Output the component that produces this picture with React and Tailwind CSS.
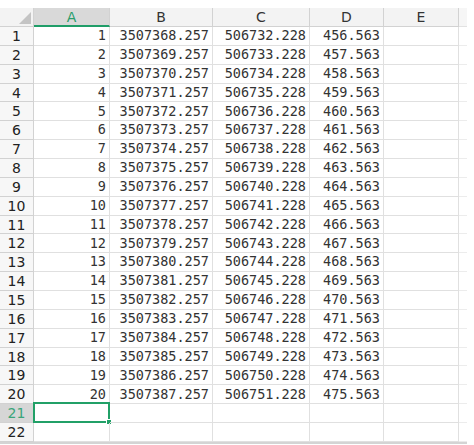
import React from "react";

const cols = [
  { key: "A", w: "w-[76px]" },
  { key: "B", w: "w-[103px]" },
  { key: "C", w: "w-[97px]" },
  { key: "D", w: "w-[74px]" },
  { key: "E", w: "w-[75px]" },
];

const rows = Array.from({ length: 22 }, (_, i) => {
  const n = i + 1;
  if (n > 20) return { n, cells: ["", "", "", "", ""] };
  return {
    n,
    cells: [
      String(n),
      (3507367.257 + n).toFixed(3),
      (506731.228 + n).toFixed(3),
      (455.563 + n).toFixed(3),
      "",
    ],
  };
});

function HeaderRow() {
  return (
    <div className="flex h-[19px]">
      {/* select-all corner */}
      <div className="relative w-[34px] shrink-0 bg-[#f3f3f3] border-r border-b border-[#d2d2d2]">
        <svg
          className="absolute left-[19px] top-[4px]"
          width="12"
          height="12"
          viewBox="0 0 12 12"
        >
          <polygon points="12,0 12,12 0,12" fill="#c4c4c4" />
        </svg>
      </div>
      {cols.map((c) =>
        c.key === "A" ? (
          <div
            key={c.key}
            className={`${c.w} shrink-0 bg-[#d9d9d9] border-r border-[#d2d2d2] border-b-2 border-b-[#1f9d68] flex items-center justify-center text-[#2a9d6c]`}
          >
            {c.key}
          </div>
        ) : (
          <div
            key={c.key}
            className={`${c.w} shrink-0 bg-[#f3f3f3] border-r border-b border-[#d2d2d2] flex items-center justify-center text-[#333]`}
          >
            {c.key}
          </div>
        )
      )}
      <div className="w-[8px] shrink-0 bg-[#f6f6f6] border-b border-[#e2e2e2]" />
    </div>
  );
}

function DataRow({ row }) {
  const selected = row.n === 21;
  return (
    <div className="flex h-[18.86px]">
      <div
        className={
          selected
            ? "w-[34px] shrink-0 bg-[#d6d6d6] border-r border-b border-[#d2d2d2] flex items-center justify-center text-[#3aa57a]"
            : "w-[34px] shrink-0 bg-[#f7f7f7] border-r border-b border-[#d2d2d2] flex items-center justify-center text-[#222]"
        }
      >
        {row.n}
      </div>
      {cols.map((c, i) => (
        <div
          key={c.key}
          className={`${c.w} relative shrink-0 border-r border-b border-[#e0e0e0] flex items-center justify-end pr-[3px] font-['DejaVu_Sans_Mono',monospace] text-[13.5px] text-[#333]`}
        >
          {row.cells[i]}
          {selected && i === 0 && (
            <div className="absolute -left-[1px] -top-[2px] -right-[1px] -bottom-[1px] border-2 border-[#21a067]">
              <div className="absolute -right-[4px] -bottom-[4px] w-[6px] h-[6px] bg-[#21a067] border border-white" />
            </div>
          )}
        </div>
      ))}
      <div className="w-[8px] shrink-0 border-b border-[#ececec]" />
    </div>
  );
}

export default function App() {
  return (
    <div className="w-[474px] h-[445px] bg-white overflow-hidden pt-[8px] font-['DejaVu_Sans',sans-serif] text-[14px] leading-none">
      <HeaderRow />
      {rows.map((r) => (
        <DataRow key={r.n} row={r} />
      ))}
      <div className="w-[467px] h-[2px] bg-[#d4d4d4]" />
    </div>
  );
}
